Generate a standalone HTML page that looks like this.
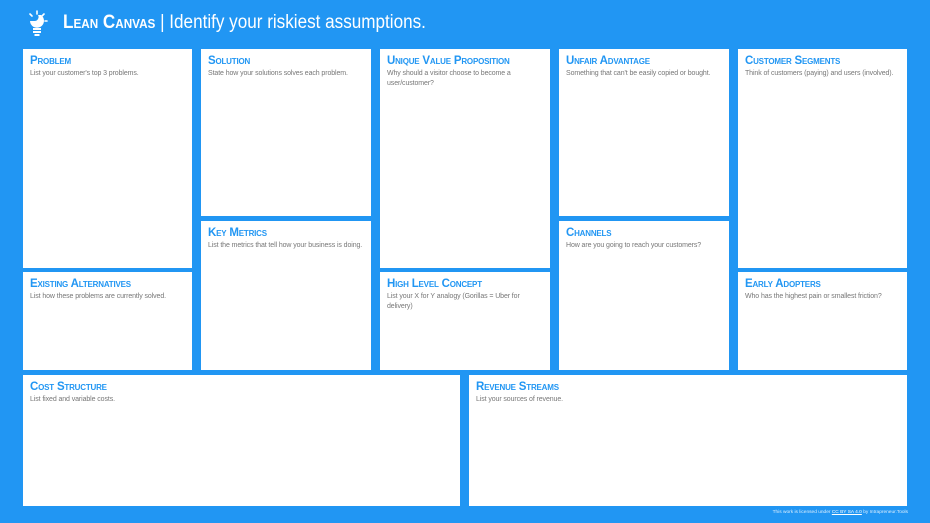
<!DOCTYPE html>
<html><head><meta charset="utf-8"><style>
*{margin:0;padding:0;box-sizing:border-box}
body{width:930px;height:523px;background:#2196f3;position:relative;overflow:hidden;font-family:"Liberation Sans",sans-serif}
.b{position:absolute;background:#fff;padding:5px 7px}
.b h2{color:#2196f3;font-size:11.5px;font-variant:small-caps;font-weight:bold;margin-top:1px;letter-spacing:-0.2px}
.b p{color:#777;font-size:7px;line-height:9.5px;margin-top:2px;letter-spacing:-0.1px}
.hdr{position:absolute;left:63px;top:12px;color:#fff;font-size:19px;white-space:nowrap;transform:scaleX(0.9);transform-origin:left top}
.hdr b{font-variant:small-caps;font-size:19px}
.foot{position:absolute;right:22px;top:510px;color:#dceefd;font-size:4.8px}
.foot u{color:#fff}
</style></head><body>
<svg style="position:absolute;left:25px;top:9px" width="24" height="28" viewBox="0 0 24 28">
<g stroke="#fff" stroke-width="1.6" fill="none" stroke-linecap="round">
<line x1="12" y1="2" x2="12" y2="5"/><line x1="5" y1="5" x2="7" y2="7"/><line x1="19" y1="5" x2="17" y2="7"/><line x1="20" y1="12" x2="22" y2="12"/></g>
<path d="M5 12 a7 7 0 1 0 11 -6 l-3 0 a4 4 0 0 1 -4 6 z" fill="#fff"/>
<rect x="8" y="19" width="8" height="2" fill="#fff"/><rect x="8" y="22" width="8" height="2" fill="#fff"/><rect x="9.5" y="25" width="5" height="2" fill="#fff"/>
</svg>
<div class="hdr"><b>Lean Canvas</b> | Identify your riskiest assumptions.</div>

<div class="b" style="left:23px;top:49px;width:169px;height:219px"><h2>Problem</h2><p>List your customer's top 3 problems.</p></div>
<div class="b" style="left:23px;top:272px;width:169px;height:98px"><h2>Existing Alternatives</h2><p>List how these problems are currently solved.</p></div>
<div class="b" style="left:201px;top:49px;width:170px;height:167px"><h2>Solution</h2><p>State how your solutions solves each problem.</p></div>
<div class="b" style="left:201px;top:221px;width:170px;height:149px"><h2>Key Metrics</h2><p>List the metrics that tell how your business is doing.</p></div>
<div class="b" style="left:380px;top:49px;width:170px;height:219px"><h2>Unique Value Proposition</h2><p>Why should a visitor choose to become a user/customer?</p></div>
<div class="b" style="left:380px;top:272px;width:170px;height:98px"><h2>High Level Concept</h2><p>List your X for Y analogy (Gorillas = Uber for delivery)</p></div>
<div class="b" style="left:559px;top:49px;width:170px;height:167px"><h2>Unfair Advantage</h2><p>Something that can't be easily copied or bought.</p></div>
<div class="b" style="left:559px;top:221px;width:170px;height:149px"><h2>Channels</h2><p>How are you going to reach your customers?</p></div>
<div class="b" style="left:738px;top:49px;width:169px;height:219px"><h2>Customer Segments</h2><p>Think of customers (paying) and users (involved).</p></div>
<div class="b" style="left:738px;top:272px;width:169px;height:98px"><h2>Early Adopters</h2><p>Who has the highest pain or smallest friction?</p></div>
<div class="b" style="left:23px;top:375px;width:437px;height:131px"><h2>Cost Structure</h2><p>List fixed and variable costs.</p></div>
<div class="b" style="left:469px;top:375px;width:438px;height:131px"><h2>Revenue Streams</h2><p>List your sources of revenue.</p></div>
<div class="foot">This work is licensed under <u>CC BY SA 4.0</u> by Intrapreneur.Tools</div>
</body></html>
